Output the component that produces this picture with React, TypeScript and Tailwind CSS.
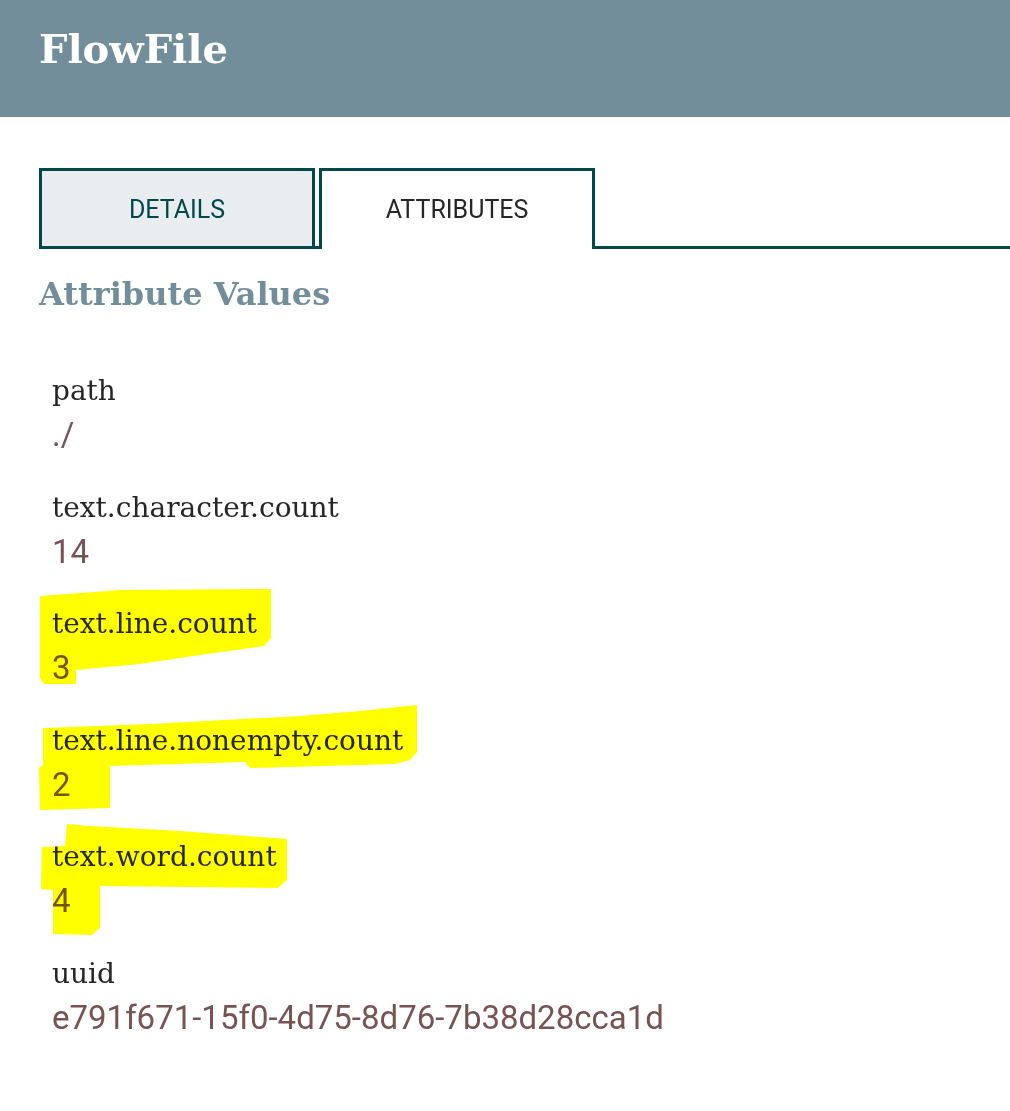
import React from 'react';

interface Attr {
  name: string;
  value: string;
}

const attributes: Attr[] = [
  { name: 'path', value: './' },
  { name: 'text.character.count', value: '14' },
  { name: 'text.line.count', value: '3' },
  { name: 'text.line.nonempty.count', value: '2' },
  { name: 'text.word.count', value: '4' },
  { name: 'uuid', value: 'e791f671-15f0-4d75-8d76-7b38d28cca1d' },
];

const slab = "font-['DejaVu_Serif',serif]";
const sans = "font-['Roboto','Liberation_Sans',sans-serif]";

// freehand highlighter marks, page coordinates
const marks = [
  '40,596 120,590 271,589 271,638 264,646 200,655 140,664 76,670 76,684 44,684 40,678',
  '43,728 150,724 300,716 360,711 417,705 417,752 410,760 395,764 250,768 245,762 110,766 110,808 40,810 39,768 43,765',
  '42,847 65,846 67,824 90,826 180,831 287,839 287,880 278,888 100,886 100,928 92,935 53,934 53,890 41,889',
];

export default function App() {
  return (
    <div className="relative w-[1010px] h-[1111px] bg-white overflow-hidden">
      <div className="h-[117px] bg-[#728e9b] pl-[39px] pt-[23px]">
        <h1 className={`${slab} text-[40px] leading-[52px] font-bold text-white`}>FlowFile</h1>
      </div>

      <div className="pl-[39px] pt-[51px]">
        <div className="flex h-[81px]">
          <div className={`w-[276px] border-[3px] border-[#004849] bg-[#e9edf0] flex items-center justify-center pt-[2px] ${sans} text-[25px] text-[#004849]`}>
            DETAILS
          </div>
          <div className="w-[4px] border-b-[3px] border-[#004849]" />
          <div className={`w-[276px] border-[3px] border-b-0 border-[#004849] bg-white flex items-center justify-center ${sans} text-[25px] text-[#262626]`}>
            ATTRIBUTES
          </div>
          <div className="flex-1 border-b-[3px] border-[#004849]" />
        </div>

        <h2 className={`${slab} text-[32px] leading-[44px] font-bold text-[#728e9b] mt-[23px]`}>
          Attribute Values
        </h2>

        <div className="pl-[13px] pt-[58px]">
          {attributes.map((a) => (
            <div key={a.name} className="h-[116.5px]">
              <div className={`${slab} text-[28px] leading-[34px] text-[#262626]`}>{a.name}</div>
              <div className={`${sans} text-[33px] leading-[40px] mt-[7px] text-[#775351]`}>{a.value}</div>
            </div>
          ))}
        </div>
      </div>

      <svg className="absolute inset-0 pointer-events-none mix-blend-multiply" width="1010" height="1111">
        {marks.map((p, i) => (
          <polygon key={i} points={p} fill="#ffff00" />
        ))}
      </svg>
    </div>
  );
}
